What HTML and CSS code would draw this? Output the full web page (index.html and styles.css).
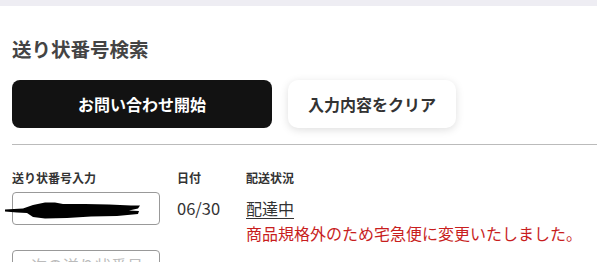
FILE: index.html
```html
<!DOCTYPE html>
<html lang="ja">
<head>
<meta charset="utf-8">
<link rel="stylesheet" href="styles.css">
</head>
<body>
<div class="topbar"></div>
<main class="content">
  <h1 class="title">送り状番号検索</h1>
  <div class="actions">
    <button class="btn btn-primary">お問い合わせ開始</button>
    <button class="btn btn-secondary">入力内容をクリア</button>
  </div>
  <div class="divider"></div>
  <div class="grid">
    <div class="label">送り状番号入力</div>
    <div class="label">日付</div>
    <div class="label">配送状況</div>

    <div class="field">
      <svg class="redact" width="140" height="18" viewBox="0 0 140 18">
        <path d="M0 7.5 L18 6.5 L28 3 L40 0.5 L50 0.5 L58 2 L80 2 L104 2.5 L126 3.5 L135 3.5 L133 6.5 L124 8.5 L134 9 L133 12 L112 14 L86 14.5 L62 16 L40 16.5 L28 15 L22 11 L12 10.5 L0 9.5 Z" fill="#000"/>
      </svg>
    </div>
    <div class="date">06/30</div>
    <div class="status">
      <div class="status-main">配達中</div>
      <div class="status-note">商品規格外のため宅急便に変更いたしました。</div>
    </div>

    <div class="field field-next"><span class="placeholder">次の送り状番号</span></div>
  </div>
</main>
</body>
</html>
```

FILE: styles.css
```css
html, body {
  margin: 0;
  padding: 0;
  background: #fff;
  font-family: "Noto Sans CJK JP", "Noto Sans", sans-serif;
  color: #333;
  overflow: hidden;
}

.topbar {
  height: 6px;
  background: #eeedf3;
}

.content {
  padding-left: 12px;
}

.title {
  margin: 0;
  padding-top: 28px;
  font-size: 19.5px;
  line-height: 29px;
  font-weight: 700;
  color: #444;
}

.actions {
  display: flex;
  gap: 16px;
  margin-top: 17px;
}

.btn {
  height: 48px;
  border: none;
  font-family: inherit;
  font-size: 16px;
  font-weight: 700;
  padding: 0;
}

.btn-primary {
  width: 260px;
  background: #121212;
  color: #fff;
  border-radius: 8px;
}

.btn-secondary {
  width: 168px;
  background: #fff;
  color: #333;
  border-radius: 10px;
  box-shadow: 0 2px 8px rgba(0, 0, 0, 0.13);
}

.divider {
  margin-top: 16px;
  border-top: 1px solid #bbb;
}

.grid {
  display: grid;
  grid-template-columns: 165px 69px 1fr;
  align-items: start;
  margin-top: 25px;
}

.label {
  font-size: 12px;
  line-height: 16px;
  font-weight: 700;
  color: #333;
  margin-bottom: 6px;
}

.field {
  position: relative;
  box-sizing: border-box;
  width: 148px;
  height: 33px;
  border: 1px solid #999;
  border-radius: 4px;
  background: #fff;
}

.redact {
  position: absolute;
  left: -8px;
  top: 9px;
}

.date {
  font-size: 16.5px;
  line-height: 33px;
  color: #333;
}

.status-main {
  font-size: 16px;
  line-height: 33px;
  color: #333;
  text-decoration: underline;
  text-underline-offset: 3px;
}

.status-note {
  font-size: 16px;
  line-height: 16px;
  color: #c81e1e;
}

.field-next {
  margin-top: 9px;
  height: 30px;
  padding-left: 18px;
  font-size: 16px;
  line-height: 28px;
}

.placeholder {
  color: #bbb;
}
```
